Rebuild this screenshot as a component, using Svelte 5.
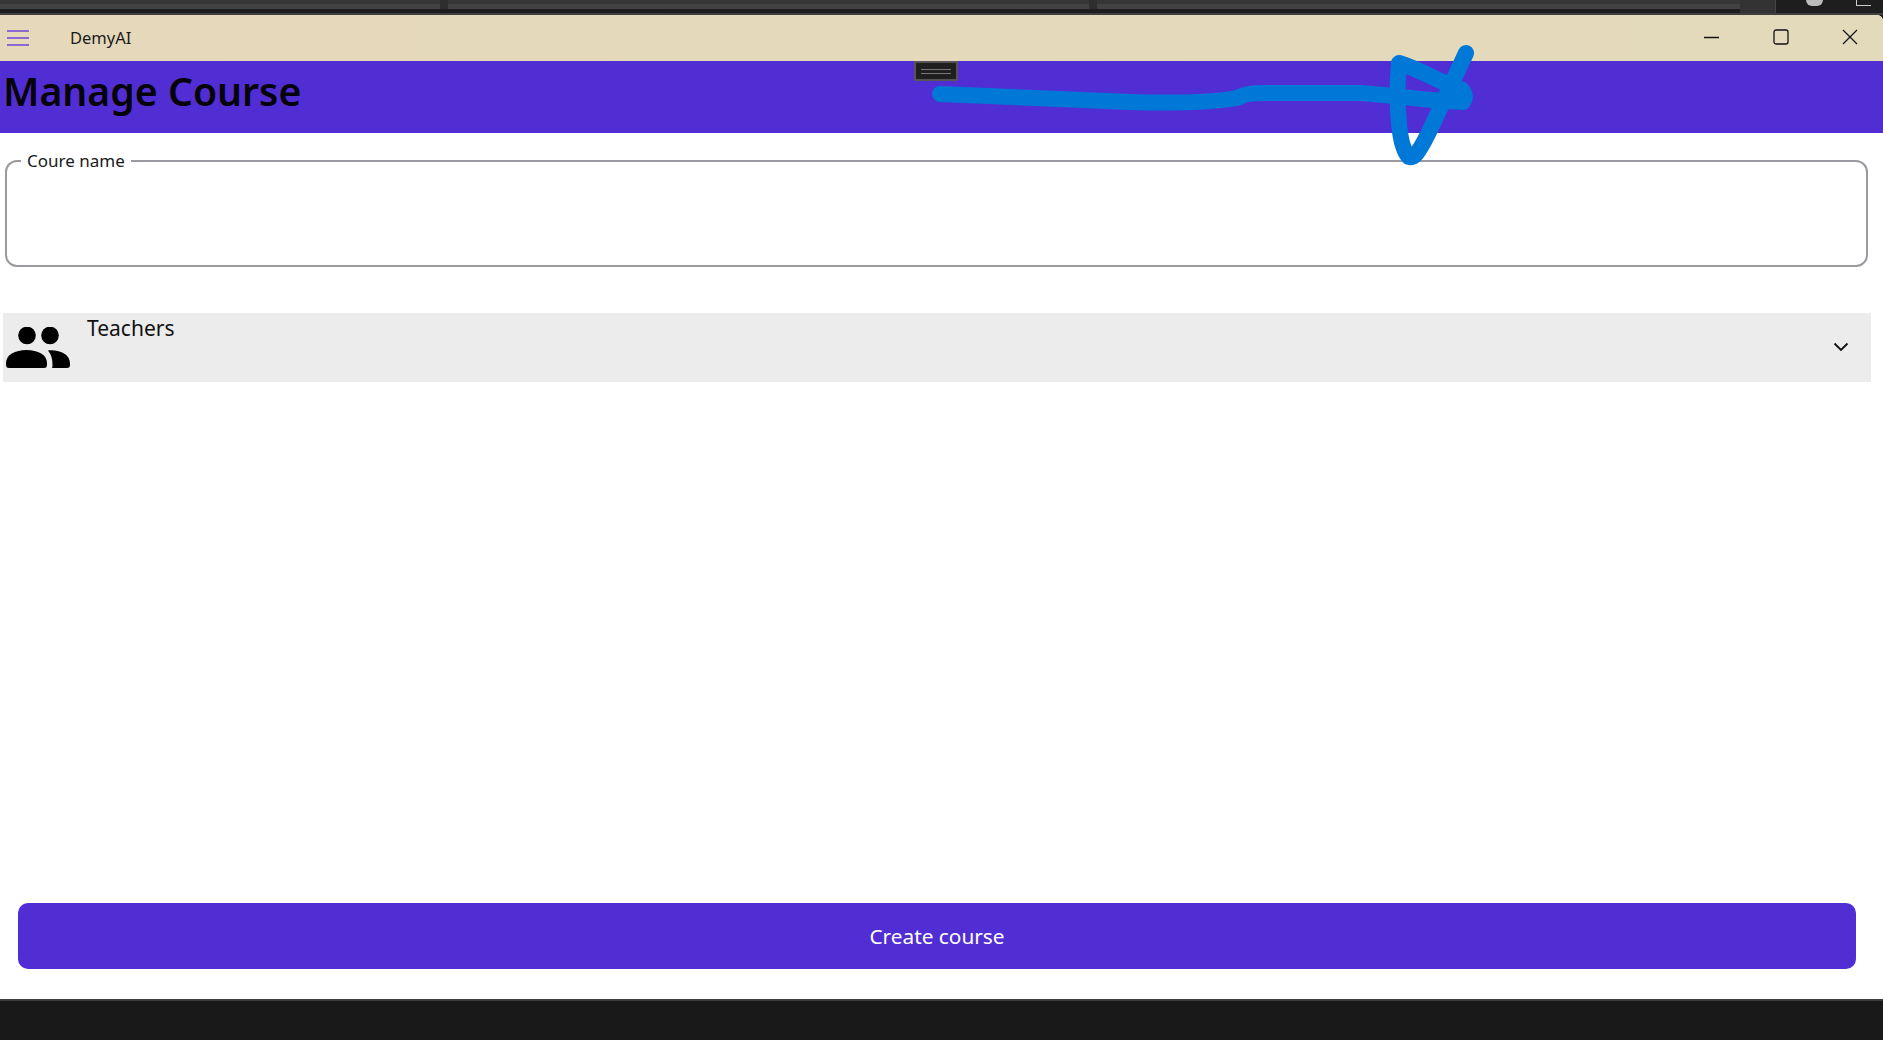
<script lang="ts">
	let courseName = $state('');
</script>

<div class="screen">
	<div class="host-strip">
		<div class="host-tabs">
			<div class="tab first"></div>
			<div class="tab second"></div>
			<div class="tab third"></div>
			<div class="host-tools">
				<span class="tool-col"></span>
				<span class="gear"></span>
				<span class="tool-box"></span>
			</div>
		</div>
	</div>

	<div class="window">
		<header class="titlebar">
			<button class="menu" aria-label="Menu">
				<svg width="22" height="16" viewBox="0 0 22 16"><path d="M0 1h22M0 8h22M0 15h22" stroke="#6a45d8" stroke-width="1.500" fill="none" /></svg>
			</button>
			<span class="app-name">DemyAI</span>
			<div class="window-controls">
				<svg width="16" height="16" viewBox="0 0 16 16"><path d="M0 8.500h15" stroke="#111" stroke-width="1.300" /></svg>
				<svg width="16" height="16" viewBox="0 0 16 16"><rect x="1" y="1" width="14" height="14" rx="2" stroke="#111" stroke-width="1.300" fill="none" /></svg>
				<svg width="16" height="16" viewBox="0 0 16 16"><path d="M1 1l14 14M15 1L1 15" stroke="#111" stroke-width="1.200" fill="none" /></svg>
			</div>
		</header>

		<div class="page-head">
			<h1>Manage Course</h1>
		</div>

		<main class="content">
			<fieldset class="field">
				<legend>Coure name</legend>
				<input bind:value={courseName} aria-label="Coure name" />
			</fieldset>

			<div class="expander">
				<svg class="people" width="64" height="41" viewBox="0 0 64 41">
					<circle cx="21" cy="8.500" r="8.800" />
					<circle cx="44" cy="8.500" r="8.800" />
					<path d="M0 36c0-8 9-13 20.500-13S41 28 41 36v2c0 2-1 3-3 3H3c-2 0-3-1-3-3z" />
					<path d="M42 23.500c12-1 22 4 22 13V38c0 2-1 3-3 3H46c.5-1 .5-2 .5-3 0-6-1-10-4.500-14.500z" />
				</svg>
				<span class="expander-label">Teachers</span>
				<svg class="chevron" width="16" height="10" viewBox="0 0 16 10"><path d="M1.500 1.500L8 8l6.500-6.500" stroke="#111" stroke-width="1.800" fill="none" /></svg>
			</div>

			<button class="create">Create course</button>
		</main>
	</div>

	<div class="grip"><span></span></div>

	<svg class="ink" width="1883" height="1040" viewBox="0 0 1883 1040" fill="none">
		<path d="M940 94C1000 96 1070 100 1130 102C1165 103 1210 103 1237 98C1245 94 1250 93 1265 93L1359 93C1380 94 1400 97 1432 100L1463 102C1466 98 1465 94 1462 90C1458 86 1450 86 1443 82C1428 75 1415 68 1399 63C1397 85 1397 105 1399 123C1400 135 1402 150 1409 157C1412 158 1415 156 1417 153C1425 142 1430 130 1436 117L1466 53" stroke="#0078d7" stroke-width="16" stroke-linecap="round" stroke-linejoin="round" />
	</svg>
</div>

<style>
	:global(body) {
		margin: 0;
		background: #191919;
		font-family: 'Noto Sans', 'Open Sans', sans-serif;
	}

	.screen {
		position: relative;
		width: 1883px;
		height: 1040px;
		overflow: hidden;
		background: #191919;
		display: flex;
		flex-direction: column;
	}

	.host-strip {
		height: 15px;
		flex: none;
		box-sizing: border-box;
		background: #1e1e1e;
		border-bottom: 2px solid #3f3f3f;
	}

	.host-tabs {
		height: 9px;
		display: flex;
		background: #2e2e2e;
	}

	.tab {
		height: 9px;
		background: linear-gradient(#363636 0 4px, #424242 4px);
	}

	.tab.first {
		width: 440px;
	}

	.tab.second {
		width: 641px;
		margin-left: 8px;
	}

	.tab.third {
		width: 643px;
		margin-left: 8px;
	}

	.host-tools {
		flex: 1;
		display: flex;
		align-items: flex-start;
		height: 13px;
		background: #1e1e1e;
	}

	.tool-col {
		width: 35px;
		height: 13px;
		background: #333;
		border-right: 1px solid #444;
		flex: none;
	}

	.gear {
		width: 17px;
		height: 6px;
		margin-left: 30px;
		border-radius: 0 0 8px 8px;
		background: #bbb;
		flex: none;
	}

	.tool-box {
		width: 14px;
		height: 5px;
		margin-left: 33px;
		border: solid #ccc;
		border-width: 0 0 1px 1px;
		flex: none;
	}

	.window {
		height: 984px;
		flex: none;
		background: #fff;
		display: flex;
		flex-direction: column;
		border-bottom: 2px solid #3c3c3c;
		border-top-right-radius: 6px;
		overflow: hidden;
	}

	.titlebar {
		height: 46px;
		flex: none;
		display: flex;
		align-items: center;
		background: linear-gradient(90deg, #e6d9bb, #e3dabb);
		color: #1a1a1a;
	}

	.menu {
		width: 70px;
		height: 46px;
		padding: 0 0 0 7px;
		margin-top: -1px;
		border: 0;
		background: none;
		display: flex;
		align-items: center;
		flex: none;
	}

	.app-name {
		font-size: 16.500px;
		margin-top: -2px;
	}

	.window-controls {
		margin-left: auto;
		margin-right: 25px;
		margin-bottom: 3px;
		display: flex;
		gap: 53px;
		align-items: center;
	}

	.page-head {
		height: 72px;
		flex: none;
		background: #512dd4;
	}

	h1 {
		margin: 0;
		padding: 0 0 0 3px;
		font-size: 39.200px;
		font-weight: 600;
		line-height: 60px;
		color: #050308;
	}

	.content {
		flex: 1;
		display: flex;
		flex-direction: column;
		padding: 0 3px;
		min-height: 0;
	}

	.field {
		margin: 16px 0 0 2px;
		width: 1863px;
		height: 118px;
		flex: none;
		box-sizing: border-box;
		padding: 0;
		border: 2px solid #9c9aa0;
		border-radius: 12px;
	}

	.field legend {
		margin-left: 14px;
		padding: 1px 6px 0;
		font-size: 17px;
		line-height: 22px;
		color: #1a1a1a;
	}

	.field input {
		border: 0;
		outline: 0;
		background: none;
		width: 100%;
	}

	.expander {
		margin-top: 46px;
		width: 1868px;
		height: 69px;
		flex: none;
		display: flex;
		align-items: flex-start;
		background: #ececec;
	}

	.people {
		margin: 14px 0 0 3px;
		flex: none;
	}

	.expander-label {
		margin: 2px 0 0 17px;
		font-size: 21px;
		line-height: 26px;
		color: #111;
	}

	.chevron {
		margin: 29px 22px 0 auto;
		flex: none;
	}

	.create {
		margin: auto 0 30px 15px;
		width: 1838px;
		height: 66px;
		flex: none;
		border: 0;
		border-radius: 10px;
		background: #512dd4;
		color: #fff;
		font-family: inherit;
		font-size: 20.800px;
	}

	.grip {
		position: absolute;
		left: 914px;
		top: 61px;
		width: 44px;
		height: 20px;
		box-sizing: border-box;
		border: 2px solid #555;
		background: #1f1f1f;
		display: flex;
		align-items: center;
		justify-content: center;
	}

	.grip span {
		width: 30px;
		height: 3px;
		border-top: 1px solid #777;
		border-bottom: 1px solid #777;
	}

	.ink {
		position: absolute;
		left: 0;
		top: 0;
		pointer-events: none;
	}
</style>
